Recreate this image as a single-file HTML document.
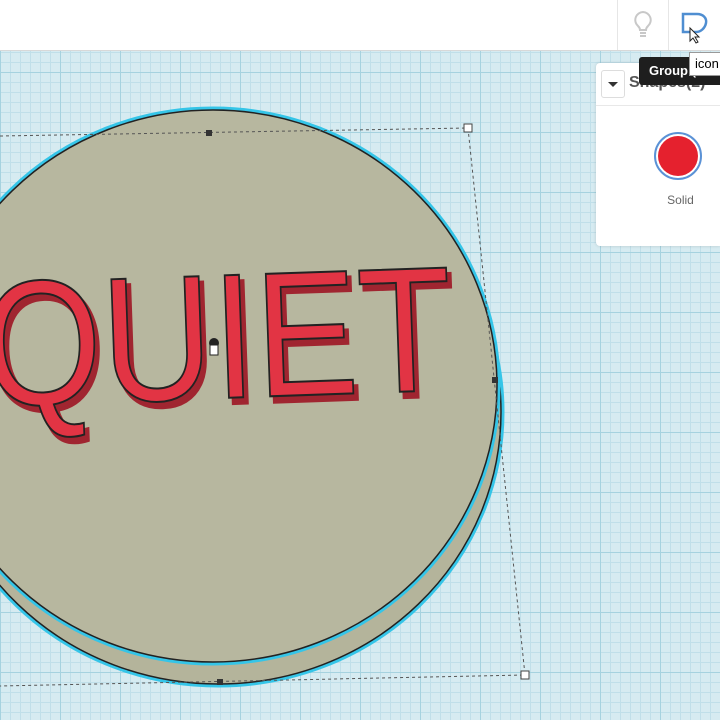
<!DOCTYPE html>
<html><head><style>
body{margin:0;width:720px;height:720px;overflow:hidden;position:relative;font-family:"Liberation Sans",sans-serif;
background-color:#d6ebf1;
background-image:linear-gradient(#a6d2df 1px,transparent 1px),linear-gradient(90deg,#a6d2df 1px,transparent 1px),linear-gradient(#c0dfe9 1px,transparent 1px),linear-gradient(90deg,#c0dfe9 1px,transparent 1px);
background-size:60px 60px,60px 60px,10px 10px,10px 10px;background-position:0 12px,0 0,0 2px,0 0;}
.top{position:absolute;left:0;top:0;width:720px;height:50px;background:#fff;border-bottom:1px solid #d8d8d8}
.panel{position:absolute;left:596px;top:63px;width:124px;height:183px;background:#fff;border-radius:4px 0 0 4px;box-shadow:0 0 3px rgba(0,0,0,.15)}
</style></head><body>
<div class="top">
 <div style="position:absolute;left:617px;top:0;width:1px;height:50px;background:#e6e6e6"></div>
 <div style="position:absolute;left:668px;top:0;width:1px;height:50px;background:#e6e6e6"></div>
 <svg style="position:absolute;left:630px;top:10px" width="26" height="30"><path d="M13 2a8 8 0 0 0-5 14c1 1 2 3 2 4h6c0-1 1-3 2-4a8 8 0 0 0-5-14z" fill="none" stroke="#c8c8c8" stroke-width="2"/><path d="M10 23h6M10 26h6" stroke="#c8c8c8" stroke-width="2"/></svg>
 <svg style="position:absolute;left:680px;top:10px" width="30" height="34"><path d="M3 4h14c6 0 10 4 9 9-1 5-5 9-10 9H3z" fill="none" stroke="#4f8ed1" stroke-width="2.5"/><path d="M10 18l0 13 3-3 3 5 2-1-3-5h4z" fill="#fff" stroke="#222" stroke-width="1"/></svg>
</div>
<svg style="position:absolute;left:0;top:0" width="720" height="720">
 <ellipse cx="218" cy="412" rx="285" ry="274" fill="#b4b49b" stroke="#35c5e8" stroke-width="3"/>
 <ellipse cx="218" cy="412" rx="283" ry="272" fill="none" stroke="#222" stroke-width="1.5"/>
 <ellipse cx="213" cy="386" rx="286" ry="278" fill="#b7b79f" stroke="#35c5e8" stroke-width="3"/>
 <ellipse cx="213" cy="386" rx="284" ry="276" fill="none" stroke="#222" stroke-width="1.5"/>
 <path d="M0 136L468 128L525 675L0 686" fill="none" stroke="#555" stroke-width="1" stroke-dasharray="3 3"/>
 <rect x="464" y="124" width="8" height="8" fill="#fff" stroke="#444"/>
 <rect x="521" y="671" width="8" height="8" fill="#fff" stroke="#444"/>
 <rect x="206" y="130" width="6" height="6" fill="#333"/>
 <rect x="492" y="377" width="6" height="6" fill="#333"/>
 <rect x="217" y="679" width="6" height="6" fill="#333"/>
 <g font-family="Liberation Sans,sans-serif" font-size="178">
  <text x="-14" y="404" textLength="470" lengthAdjust="spacingAndGlyphs" fill="#a02530" stroke="#a02530" stroke-width="3" transform="rotate(-2 220 340)">QUIET</text>
  <text x="-18" y="398" textLength="470" lengthAdjust="spacingAndGlyphs" fill="#e23444" stroke="#222" stroke-width="2" transform="rotate(-2 220 340)">QUIET</text>
 </g>
 <circle cx="214" cy="343" r="5" fill="#222"/><rect x="210" y="345" width="8" height="10" fill="#fff" stroke="#222"/>
</svg>
<div class="panel">
 <div style="position:absolute;left:5px;top:7px;width:22px;height:26px;border:1px solid #ddd;border-radius:3px"><div style="position:absolute;left:6px;top:11px;border:5px solid transparent;border-top:5px solid #333"></div></div>
 <div style="position:absolute;left:33px;top:11px;font-size:16px;font-weight:bold;color:#555">Shapes(2)</div>
 <div style="position:absolute;left:0;top:42px;width:124px;height:1px;background:#e8e8e8"></div>
 <div style="position:absolute;left:58px;top:69px;width:48px;height:48px;border:2px solid #5b92d6;border-radius:50%;box-sizing:border-box"></div>
 <div style="position:absolute;left:62px;top:73px;width:40px;height:40px;background:#e5212e;border-radius:50%"></div>
 <div style="position:absolute;left:0;width:169px;top:130px;text-align:center;font-size:12px;color:#666">Solid</div>
</div>
<div style="position:absolute;left:639px;top:57px;width:80px;height:28px;background:#1e1e1e;border-radius:3px;color:#fff;font-size:13px;font-weight:bold;line-height:27px;padding-left:10px">Group (ell</div>
<div style="position:absolute;left:689px;top:52px;width:40px;height:22px;background:#fff;border:1px solid #999;font-size:13px;line-height:22px;padding-left:5px;z-index:2">icon</div>
</body></html>
